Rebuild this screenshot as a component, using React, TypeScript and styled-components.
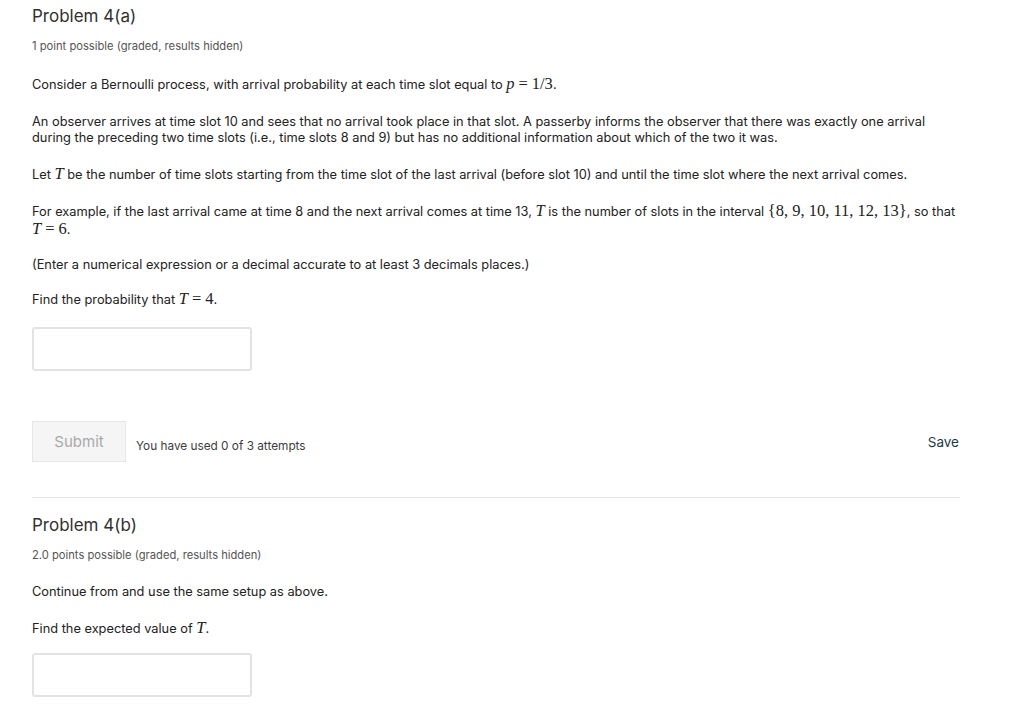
import { createGlobalStyle } from "styled-components";
import styled from "styled-components";

const GlobalStyle = createGlobalStyle`
    html, body {
        margin: 0;
        padding: 0;
        background: #ffffff;
    }
    body {
        font-family: Inter, "Noto Sans", sans-serif;
        color: #222222;
    }
`;

const Page = styled.div`
    width: 928px;
    padding: 6px 0 0 32px;
`;

const Problem = styled.section`
    display: flex;
    flex-direction: column;
`;

const Title = styled.h3`
    margin: 0;
    font-size: 17px;
    font-weight: 400;
    line-height: 20px;
    color: #313131;
`;

const Points = styled.div`
    margin: 13px 0 22px 0;
    font-size: 11.2px;
    line-height: 14px;
    color: #555555;
`;

const Para = styled.p<{ $gap?: number }>`
    margin: 0 0 ${({ $gap }) => $gap ?? 19}px 0;
    font-size: 12.8px;
    line-height: 16px;
    color: #222222;
`;

const Math = styled.span`
    font-family: "Liberation Serif", "DejaVu Serif", serif;
    font-size: 16.5px;
    line-height: 18px;
    white-space: nowrap;
`;

const Var = styled.i`
    font-style: italic;
`;

const Op = styled.span`
    padding: 0 4px;
`;

const Answer = styled.input`
    box-sizing: border-box;
    width: 220px;
    height: 44px;
    border: 2px solid #e3e3e3;
    border-radius: 3px;
    background: #ffffff;
    outline: none;
`;

const ActionRow = styled.div`
    display: flex;
    align-items: center;
    margin-top: 50px;
`;

const SubmitButton = styled.button`
    box-sizing: border-box;
    width: 94px;
    height: 41px;
    background: #f5f5f5;
    border: 1px solid #e6e6e6;
    border-radius: 0;
    color: #a9a9a9;
    font-family: Inter, "Noto Sans", sans-serif;
    font-size: 15px;
`;

const Attempts = styled.span`
    margin: 8px 0 0 10px;
    font-size: 11.8px;
    color: #3c3c3c;
`;

const SaveButton = styled.button`
    margin-left: auto;
    background: none;
    border: none;
    padding: 0 1px 0 0;
    font-family: Inter, "Noto Sans", sans-serif;
    font-size: 13.5px;
    color: #1c3a47;
`;

const Divider = styled.hr`
    margin: 35px 0 17px 0;
    border: none;
    border-top: 1px solid #e5e5e5;
`;

export default function App() {
    return (
        <>
            <GlobalStyle />
            <Page>
                <Problem>
                    <Title>Problem 4(a)</Title>
                    <Points>1 point possible (graded, results hidden)</Points>
                    <Para $gap={21}>
                        Consider a Bernoulli process, with arrival probability at each time slot equal to <Math><Var>p</Var><Op>=</Op>1/3</Math>.
                    </Para>
                    <Para>
                        An observer arrives at time slot 10 and sees that no arrival took place in that slot. A passerby informs the observer that there was exactly one arrival during the preceding two time slots (i.e., time slots 8 and 9) but has no additional information about which of the two it was.
                    </Para>
                    <Para>
                        Let <Math><Var>T</Var></Math> be the number of time slots starting from the time slot of the last arrival (before slot 10) and until the time slot where the next arrival comes.
                    </Para>
                    <Para>
                        For example, if the last arrival came at time 8 and the next arrival comes at time 13, <Math><Var>T</Var></Math> is the number of slots in the interval <Math>{"{8, 9, 10, 11, 12, 13}"}</Math>, so that <Math><Var>T</Var><Op>=</Op>6</Math>.
                    </Para>
                    <Para $gap={17}>(Enter a numerical expression or a decimal accurate to at least 3 decimals places.)</Para>
                    <Para>
                        Find the probability that <Math><Var>T</Var><Op>=</Op>4</Math>.
                    </Para>
                    <Answer type="text" aria-label="answer 4a" />
                    <ActionRow>
                        <SubmitButton>Submit</SubmitButton>
                        <Attempts>You have used 0 of 3 attempts</Attempts>
                        <SaveButton>Save</SaveButton>
                    </ActionRow>
                </Problem>
                <Divider />
                <Problem>
                    <Title>Problem 4(b)</Title>
                    <Points>2.0 points possible (graded, results hidden)</Points>
                    <Para>Continue from and use the same setup as above.</Para>
                    <Para $gap={16}>
                        Find the expected value of <Math><Var>T</Var></Math>.
                    </Para>
                    <Answer type="text" aria-label="answer 4b" />
                </Problem>
            </Page>
        </>
    );
}
